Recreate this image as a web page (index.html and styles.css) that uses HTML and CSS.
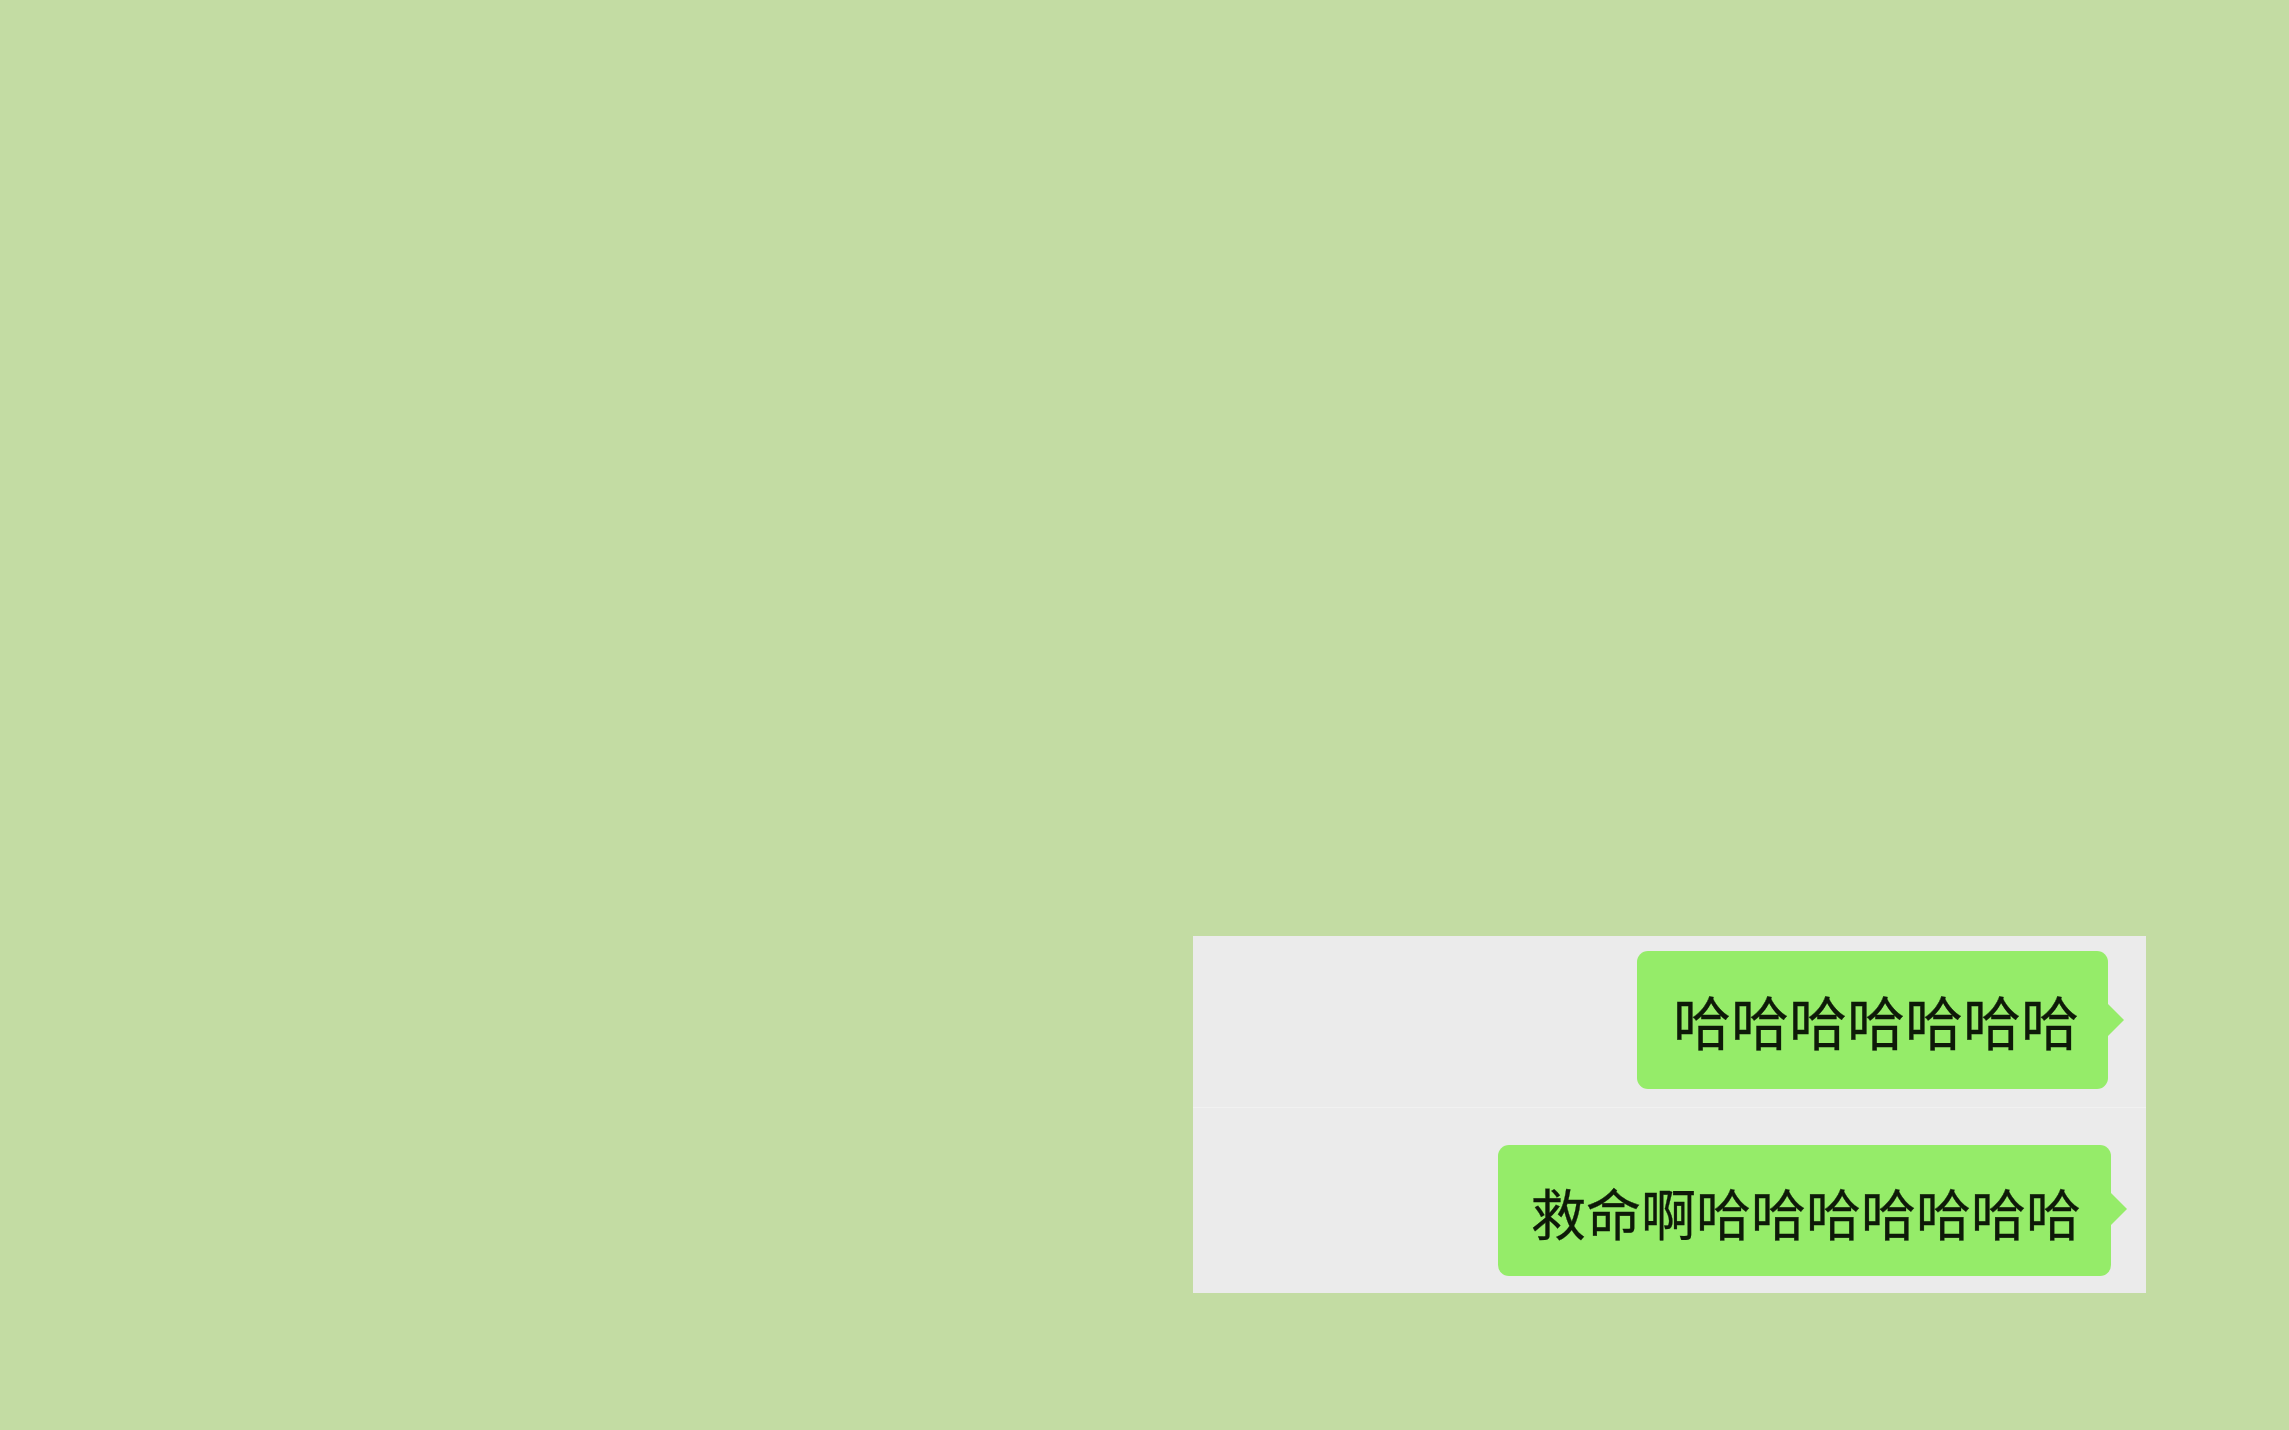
FILE: index.html
```html
<!DOCTYPE html>
<html lang="zh">
<head>
<meta charset="utf-8">
<link rel="stylesheet" href="styles.css">
</head>
<body>
<div class="stage">
  <div class="chat">
    <div class="row row-first">
      <div class="bubble bubble-a">哈哈哈哈哈哈哈</div>
    </div>
    <div class="row row-second">
      <div class="bubble bubble-b">救命啊哈哈哈哈哈哈哈</div>
    </div>
  </div>
</div>
</body>
</html>
```

FILE: styles.css
```css
html, body {
  margin: 0;
  padding: 0;
  background: #c3dca3;
  width: 2289px;
  height: 1430px;
  overflow: hidden;
}

.stage {
  padding-top: 936px;
  padding-left: 1193px;
}

.chat {
  width: 953px;
  height: 357px;
  background: #ebebeb;
  display: flex;
  flex-direction: column;
}

.row {
  display: flex;
  justify-content: flex-end;
  align-items: flex-start;
  box-sizing: border-box;
}

.row-first {
  height: 172px;
  padding-top: 15px;
  padding-right: 38px;
  border-bottom: 1px solid #f1f1f1;
}

.row-second {
  flex: 1;
  padding-top: 37px;
  padding-right: 35px;
}

.bubble {
  position: relative;
  background: #95ec69;
  border-radius: 11px;
  color: #0e1a08;
  font-family: "Noto Sans CJK SC", "Noto Sans", sans-serif;
  font-weight: 400;
  -webkit-text-stroke: 0.3px #0e1a08;
  display: flex;
  align-items: center;
  box-sizing: border-box;
  white-space: nowrap;
}

.bubble-a {
  height: 138px;
  font-size: 58px;
  padding: 0 29px 0 36px;
}

.bubble-b {
  height: 131px;
  font-size: 55px;
  padding: 0 30px 0 33px;
}

.bubble::after {
  content: "";
  position: absolute;
  right: -16px;
  top: 50%;
  margin-top: -17px;
  border-left: 17px solid #95ec69;
  border-top: 17px solid transparent;
  border-bottom: 17px solid transparent;
}

.bubble-b::after {
  margin-top: -19px;
}
```
